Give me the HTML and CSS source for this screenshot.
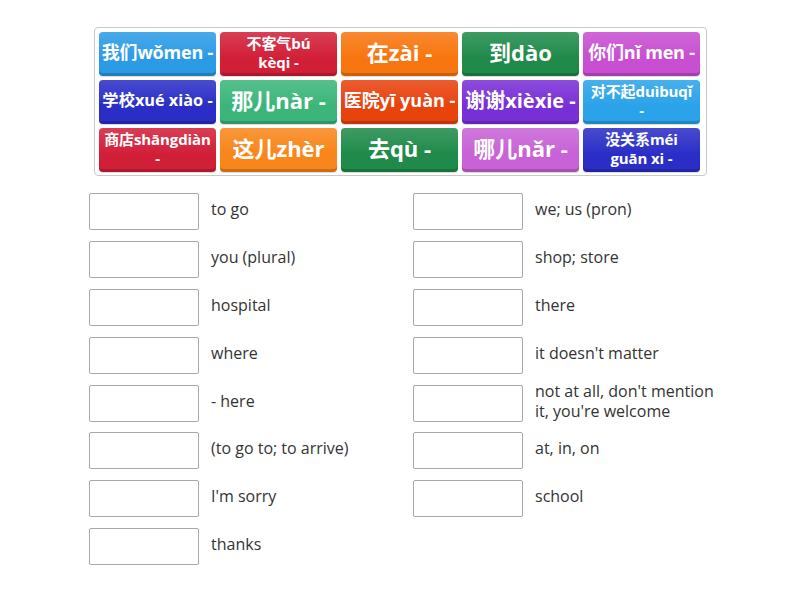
FILE: index.html
```html
<!DOCTYPE html>
<html>
<head>
<meta charset="utf-8">
<link rel="stylesheet" href="styles.css">
</head>
<body>
<div class="page">
  <div class="bank">
    <div class="tile c-blue f18">我们wǒmen -</div>
    <div class="tile c-red two">不客气bú<br>kèqi -</div>
    <div class="tile c-orange f22">在zài -</div>
    <div class="tile c-green f22">到dào</div>
    <div class="tile c-magenta f18">你们nǐ men -</div>

    <div class="tile c-navy f16">学校xué xiào -</div>
    <div class="tile c-teal f22">那儿nàr -</div>
    <div class="tile c-redorange f18b">医院yī yuàn -</div>
    <div class="tile c-purple f20">谢谢xièxie -</div>
    <div class="tile c-lightblue two">对不起duìbuqǐ<br>-</div>

    <div class="tile c-red two">商店shāngdiàn<br>-</div>
    <div class="tile c-orange2 f22">这儿zhèr</div>
    <div class="tile c-green f22">去qù -</div>
    <div class="tile c-magenta2 f22">哪儿nǎr -</div>
    <div class="tile c-navy two">没关系méi<br>guān xi -</div>
  </div>

  <div class="answers">
    <div class="col">
      <div class="row"><div class="slot"></div><div class="label">to go</div></div>
      <div class="row"><div class="slot"></div><div class="label">you (plural)</div></div>
      <div class="row"><div class="slot"></div><div class="label">hospital</div></div>
      <div class="row"><div class="slot"></div><div class="label">where</div></div>
      <div class="row"><div class="slot"></div><div class="label">- here</div></div>
      <div class="row"><div class="slot"></div><div class="label">(to go to; to arrive)</div></div>
      <div class="row"><div class="slot"></div><div class="label">I'm sorry</div></div>
      <div class="row"><div class="slot"></div><div class="label">thanks</div></div>
    </div>
    <div class="col">
      <div class="row"><div class="slot"></div><div class="label">we; us (pron)</div></div>
      <div class="row"><div class="slot"></div><div class="label">shop; store</div></div>
      <div class="row"><div class="slot"></div><div class="label">there</div></div>
      <div class="row"><div class="slot"></div><div class="label">it doesn't matter</div></div>
      <div class="row"><div class="slot"></div><div class="label">not at all, don't mention it, you're welcome</div></div>
      <div class="row"><div class="slot"></div><div class="label">at, in, on</div></div>
      <div class="row"><div class="slot"></div><div class="label">school</div></div>
    </div>
  </div>
</div>
</body>
</html>
```

FILE: styles.css
```css
html, body {
  margin: 0;
  padding: 0;
  background: #ffffff;
}

body {
  font-family: "Open Sans", "Noto Sans CJK SC", sans-serif;
  color: #333333;
}

.page {
  padding-top: 27px;
}

.bank {
  margin-left: 94px;
  width: 601px;
  padding: 4px 6px 3px 4px;
  border: 1px solid #c8c8c8;
  border-radius: 4px;
  display: grid;
  grid-template-columns: repeat(5, 117px);
  grid-auto-rows: 44px;
  gap: 4px;
}

.tile {
  display: flex;
  align-items: center;
  justify-content: center;
  text-align: center;
  color: #ffffff;
  font-weight: 700;
  border-radius: 4px;
  padding: 0 2px 3px;
  box-sizing: border-box;
  line-height: 1.2;
  overflow: hidden;
  white-space: nowrap;
  background-image: linear-gradient(rgba(255, 255, 255, 0.14), rgba(255, 255, 255, 0) 60%);
  box-shadow: inset 0 -3px 0 rgba(0, 0, 0, 0.18), 0 1px 1px rgba(0, 0, 0, 0.15);
}

.two {
  font-size: 15px;
  line-height: 19px;
  letter-spacing: -0.1px;
  padding-bottom: 2px;
}
.f16 { font-size: 16.3px; }
.f18 { font-size: 18px; letter-spacing: -0.2px; }
.f18b { font-size: 18px; }
.f20 { font-size: 20px; }
.f22 { font-size: 22px; }

.c-blue { background-color: #2b9be6; }
.c-red { background-color: #d21f38; }
.c-orange { background-color: #f8760f; }
.c-orange2 { background-color: #f8861a; }
.c-green { background-color: #1f8a4a; }
.c-magenta { background-color: #c84ed2; }
.c-magenta2 { background-color: #c862d6; }
.c-navy { background-color: #2a2ec6; }
.c-teal { background-color: #3bb57a; }
.c-redorange { background-color: #e8420d; }
.c-purple { background-color: #792fd6; }
.c-lightblue { background-color: #2aa3ea; }

.answers {
  margin-top: 17px;
  margin-left: 89px;
  display: flex;
}

.col {
  width: 324px;
  display: flex;
  flex-direction: column;
  gap: 10.9px;
}

.row {
  display: flex;
  align-items: center;
  height: 37px;
}

.slot {
  width: 110px;
  height: 37px;
  box-sizing: border-box;
  border: 1px solid #a8a8a8;
  border-radius: 2px;
  background: #ffffff;
  flex: none;
}

.label {
  margin-left: 12px;
  margin-bottom: 5px;
  width: 195px;
  font-size: 16px;
  line-height: 20px;
  color: #333333;
}
```
